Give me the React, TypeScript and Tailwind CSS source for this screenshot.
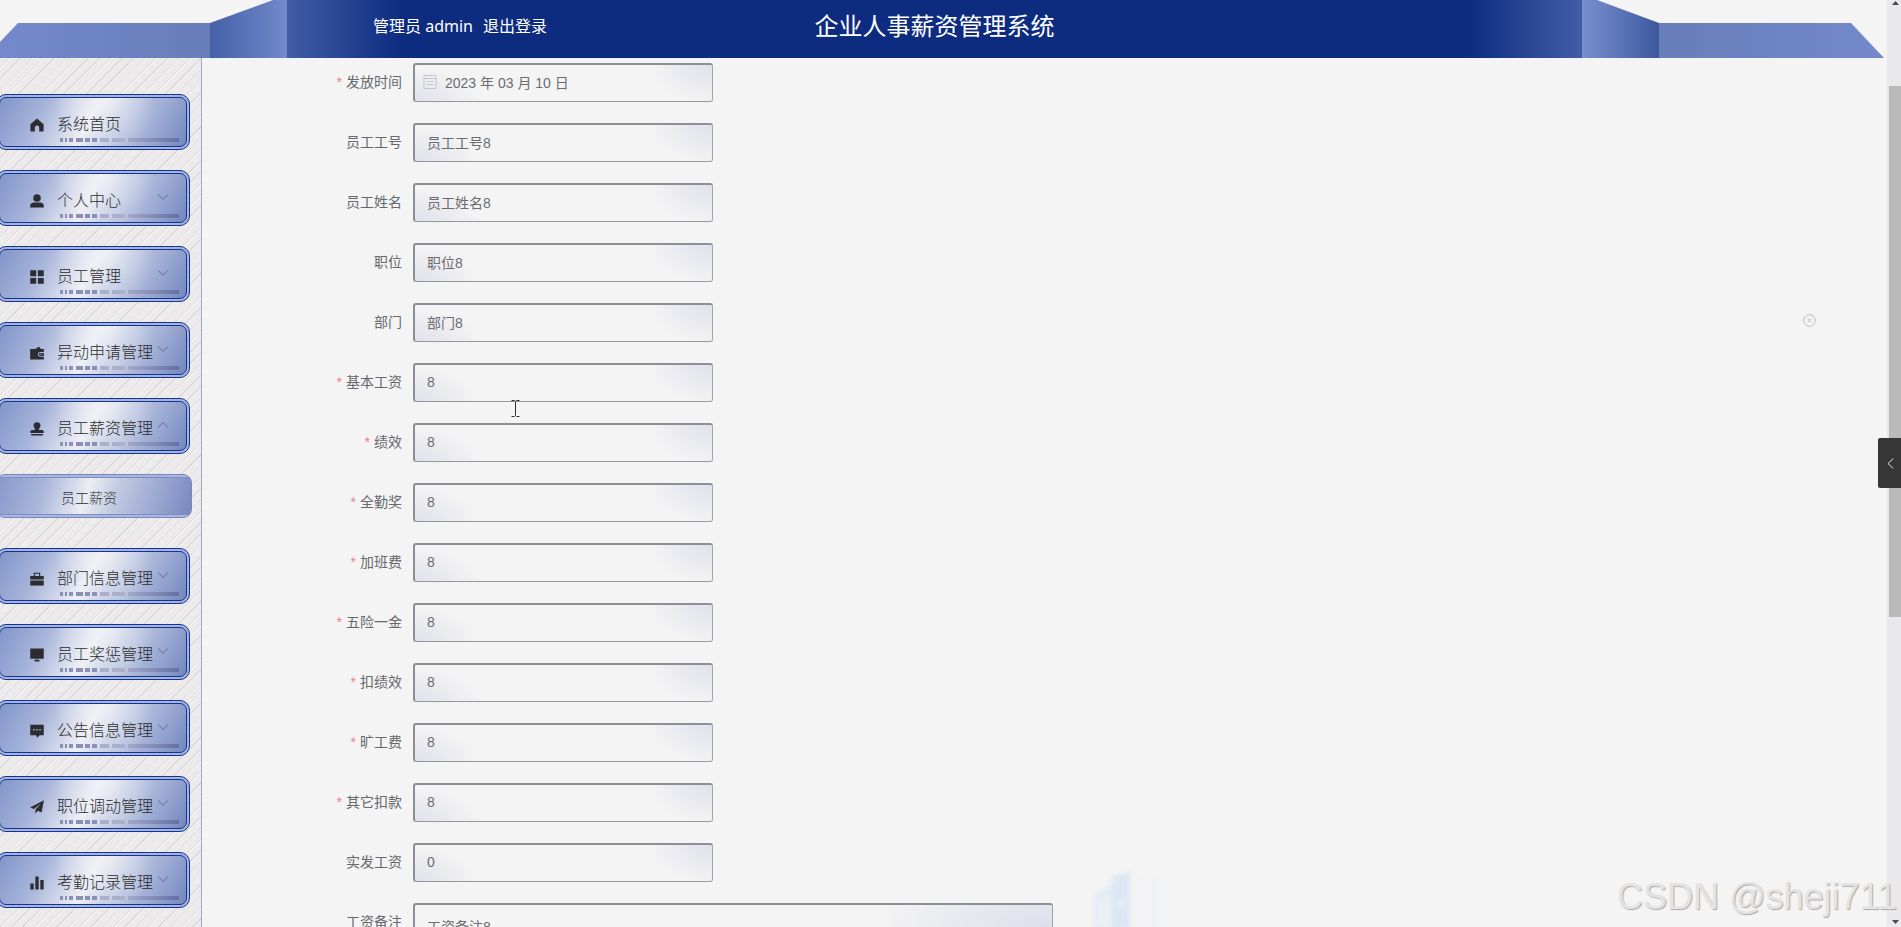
import { Fragment, useState, type ReactNode } from "react";

type MenuItem = { label: string; icon: ReactNode; open?: boolean; plain?: boolean; children?: string[] };

const MENU: MenuItem[] = [
  { label: "系统首页", plain: true, icon: <path d="M8 .5.5 7V15.500h5v-4.400a2.500 2.500 0 0 1 5 0v4.400h5V7z" /> },
  {
    label: "个人中心",
    icon: (
      <>
        <circle cx="8" cy="4.600" r="4.300" />
        <path d="M.2 15.500v-1.900c0-2.600 1.800-4 4.300-4h7c2.500 0 4.300 1.400 4.300 4v1.900z" />
      </>
    ),
  },
  { label: "员工管理", icon: <path d="M.3.3h6.700v6.700H.3zM9 .3h6.700v6.700H9zM.3 9h6.700v6.700H.3zM9 9h6.700v6.700H9z" /> },
  {
    label: "异动申请管理",
    icon: <path fillRule="evenodd" d="M.2 3.400h6L10.200.6l2.200 2.800H15.800v3.400H11.800a2.800 2.800 0 0 0 0 5.600h4v3H.2zM11.800 7.900h4v3.400h-4a1.700 1.700 0 0 1 0-3.400zm.2 1v1.400h1.300V8.900z" />,
  },
  {
    label: "员工薪资管理",
    open: true,
    children: ["员工薪资"],
    icon: <path d="M8 .3a4 4 0 0 1 4 4c0 1.900-1.800 2.900-1.800 4.900h3.300c1.300 0 2.200.8 2.200 2v1.300H.3v-1.300c0-1.200.9-2 2.200-2h3.300C5.800 7.200 4 6.200 4 4.300a4 4 0 0 1 4-4zM1.300 13.800h13.400v1.700H1.300z" />,
  },
  {
    label: "部门信息管理",
    icon: (
      <>
        <path fillRule="evenodd" d="M4.300.8h7.400v3.700h4v4H.3v-4h4zm1.300 1.300v2.400h4.800V2.100z" />
        <path d="M.3 9.700h15.400v5.800H.3z" />
      </>
    ),
  },
  { label: "员工奖惩管理", icon: <path d="M.3.5h15.400v11.700H.3zM6.500 13.200h3l1.500 1v1.200H5v-1.200z" /> },
  {
    label: "公告信息管理",
    icon: <path fillRule="evenodd" d="M.3.8h15.400v12H11L8.300 15.700 7 12.800H.3zM3.700 5.800v1.700h1.700V5.800zm3.400 0v1.700h1.700V5.800zm3.500 0v1.700h1.700V5.800z" />,
  },
  { label: "职位调动管理", icon: <path d="M15.900.4.1 8.600l4.400 1.700L12.500 4 6.200 11v4.800l2.500-3.600 4.500 2z" /> },
  { label: "考勤记录管理", icon: <path d="M.4 8.500h3.800v7H.4zM6.100.7h3.800v14.800H6.100zM11.800 4.700h3.800v10.800h-3.800z" /> },
];

const FIELDS = [
  { id: "date", label: "发放时间", value: "2023 年 03 月 10 日", required: true, date: true },
  { id: "no", label: "员工工号", value: "员工工号8" },
  { id: "name", label: "员工姓名", value: "员工姓名8" },
  { id: "post", label: "职位", value: "职位8" },
  { id: "dept", label: "部门", value: "部门8" },
  { id: "base", label: "基本工资", value: "8", required: true },
  { id: "perf", label: "绩效", value: "8", required: true },
  { id: "full", label: "全勤奖", value: "8", required: true },
  { id: "over", label: "加班费", value: "8", required: true },
  { id: "insure", label: "五险一金", value: "8", required: true },
  { id: "cutperf", label: "扣绩效", value: "8", required: true },
  { id: "absent", label: "旷工费", value: "8", required: true },
  { id: "other", label: "其它扣款", value: "8", required: true },
  { id: "real", label: "实发工资", value: "0" },
];

const BOX =
  "rounded-[3px] border-t-2 border-l-2 border-r border-b border-t-[#8e8f94] border-l-[#8e8f94] border-r-[#a2a3a8] border-b-[#96979c] text-sm text-[#6b6c70] outline-none";
const TINT =
  "bg-[radial-gradient(ellipse_64px_34px_at_0%_100%,#e0e0ec,transparent),radial-gradient(ellipse_64px_38px_at_100%_0%,#dfe0ec,transparent)]";

function Header() {
  return (
    <header className="flex h-[58px] shrink-0">
      <svg className="h-[58px] w-[287px] shrink-0" viewBox="0 0 287 58" aria-hidden="true">
        <defs>
          <linearGradient id="wingL"><stop offset="0" stopColor="#7389cb" /><stop offset="1" stopColor="#677eb9" /></linearGradient>
          <linearGradient id="foldL"><stop offset="0" stopColor="#4460a8" /><stop offset="1" stopColor="#728aca" /></linearGradient>
        </defs>
        <path d="M0 42 18 23H210V58H0z" fill="url(#wingL)" />
        <path d="M210 23 273 0h14v58h-77z" fill="url(#foldL)" />
      </svg>
      <div className="grid flex-1 grid-cols-[1fr_auto_1fr] items-center bg-[linear-gradient(90deg,#425ca6_0,#0d2c80_115px,#0d2c80_calc(100%-115px),#425ca6_100%)] pb-[6px] text-white">
        <div className="flex gap-[10px] pl-[86px] text-base">
          <span>管理员 admin</span>
          <a href="#logout">退出登录</a>
        </div>
        <h1 className="text-2xl">企业人事薪资管理系统</h1>
      </div>
      <svg className="h-[58px] w-[305px] shrink-0" viewBox="0 0 305 58" aria-hidden="true">
        <defs>
          <linearGradient id="wingR"><stop offset="0" stopColor="#677eb9" /><stop offset="1" stopColor="#7389cb" /></linearGradient>
          <linearGradient id="foldR"><stop offset="0" stopColor="#7990cd" /><stop offset="1" stopColor="#3d589f" /></linearGradient>
        </defs>
        <path d="M0 0h15l62 23v35H0z" fill="url(#foldR)" />
        <path d="M77 23h192l33 35H77z" fill="url(#wingR)" />
      </svg>
    </header>
  );
}

function Dashes() {
  return (
    <svg className="absolute bottom-[4px] left-[60px] h-1 w-[119px]" viewBox="0 0 119 4" aria-hidden="true">
      <defs>
        <linearGradient id="dash"><stop offset="0" stopColor="#a3a9c9" /><stop offset="1" stopColor="#6470a4" /></linearGradient>
      </defs>
      <path fill="#8c90b6" d="M0 0h3v4H0zM5 0h2v4H5zM9 0h4v4H9zM16 0h7v4h-7zM25 0h5v4h-5zM32 0h5v4h-5z" />
      <path fill="#abafcb" d="M40 0h9v4h-9zM52 0h13v4H52z" />
      <path fill="url(#dash)" d="M68 0h51v4H68z" />
    </svg>
  );
}

function Sidebar() {
  return (
    <nav className="w-[202px] shrink-0 overflow-hidden border-r border-[#a3a6cf] bg-[repeating-linear-gradient(135deg,#edeaeb_0,#edeaeb_6px,#dbd8da_6px,#dbd8da_7px,#f4f2f3_7px,#f4f2f3_8px)] pt-9 text-[#2c2d30]">
      <ul className="flex flex-col gap-5">
        {MENU.map((item) => (
          <Fragment key={item.label}>
            <li className="-ml-1 h-14 w-[194px]">
              <button
                type="button"
                className="block size-full rounded-[10px] border border-[#17358a] bg-[#a3b4e2] p-[2px] text-left"
              >
                <span className="relative flex size-full items-center gap-[13px] rounded-[7px] border border-[#17358a] bg-[radial-gradient(ellipse_50px_60px_at_56%_0%,#f1f2f7bb,transparent),linear-gradient(118deg,#8095ca_0%,#a9b6db_24%,#eeeff5_48%,#c3cce4_60%,#a3b0d6_78%,#7386bf_100%)] pt-[6px] pl-[30px]">
                  <svg className="size-[14px] shrink-0" viewBox="0 0 16 16" fill="currentColor" aria-hidden="true">{item.icon}</svg>
                  <span className="text-base font-light whitespace-nowrap">{item.label}</span>
                  {!item.plain && (
                    <svg className="absolute top-[20px] right-[17px] h-[6px] w-[12px]" viewBox="0 0 12 6" fill="none" stroke="#66708f" aria-hidden="true">
                      <path d={item.open ? "M1 5.500 6 .7l5 4.800" : "M1 .5l5 4.800L11 .5"} />
                    </svg>
                  )}
                  <Dashes />
                </span>
              </button>
            </li>
            {item.children?.map((child) => (
              <li key={child} className="mb-[10px] -ml-1 h-11 w-[196px]">
                <a
                  href="#salary"
                  className="block size-full rounded-[9px] border border-[#7688bd] bg-[#a9b7df] py-[2px]"
                >
                  <span className="flex size-full items-center rounded-[4px] border-y border-[#7d8ec2] bg-[linear-gradient(108deg,#8598cb_0%,#a9b6da_24%,#eceef4_46%,#c3cbe2_60%,#7688c0_100%)] pt-[4px] pl-16 text-sm font-light">
                    {child}
                  </span>
                </a>
              </li>
            ))}
          </Fragment>
        ))}
      </ul>
    </nav>
  );
}

function SalaryForm() {
  const [values, setValues] = useState<Record<string, string>>(() =>
    Object.fromEntries(FIELDS.map((f) => [f.id, f.value])),
  );
  return (
    <form className="flex flex-col gap-[21px]">
      {FIELDS.map((f) => (
        <div key={f.id} className="flex h-[39px] items-center gap-[11px]">
          <label htmlFor={f.id} className="w-[200px] pb-[2px] text-right text-sm text-[#66686c]">
            {f.required && <span className="mr-1 text-[#ea7f93]">*</span>}
            {f.label}
          </label>
          <div className="relative h-full w-[300px]">
            <input
              id={f.id}
              type="text"
              value={values[f.id]}
              onChange={(e) => setValues({ ...values, [f.id]: e.target.value })}
              className={`${BOX} ${TINT} size-full pb-[2px] ${f.date ? "pl-[30px]" : "pl-3"}`}
            />
            {f.date && (
              <svg className="absolute top-3 left-[10px] size-[14px]" viewBox="0 0 14 14" fill="none" stroke="#c3c6ce" aria-hidden="true">
                <path d="M1 .5h12v13H1zM1 3.500h12M3.500 6.500h7M3.500 9.500h7" />
              </svg>
            )}
          </div>
        </div>
      ))}
      <div className="flex items-start gap-[11px]">
        <label htmlFor="remark" className="w-[200px] text-right text-sm leading-[39px] text-[#66686c]">工资备注</label>
        <textarea
          id="remark"
          defaultValue="工资备注8"
          className={`${BOX} h-[120px] w-[640px] resize-none bg-[radial-gradient(ellipse_180px_70px_at_100%_20%,#dcdeea,transparent)] px-3 py-3`}
        />
      </div>
    </form>
  );
}

function Skyline() {
  return (
    <svg className="absolute top-[814px] left-[890px] h-[58px] w-[78px] blur-[2px]" viewBox="0 0 78 58" aria-hidden="true">
      <path d="M2 22 20 12V58H2z" fill="#e3edf5" />
      <path d="M20 4 38 0V58H20z" fill="#dbe8f3" />
      <path d="M7 28h4v26H7zM13 25h4v29h-4zM27 28h4v6h-4z" fill="#eef3f7" />
      <path d="M46 4h4v54h-4zM58 2h8v56h-8zM72 18h4v40h-4z" fill="#eff1f4" />
    </svg>
  );
}

export default function App() {
  return (
    <div className="relative flex h-screen overflow-hidden bg-[#f4f4f4] font-['Liberation_Sans','Noto_Sans_CJK_SC',sans-serif]">
      <div className="flex min-w-0 flex-1 flex-col">
        <div className="font-['Noto_Sans','Noto_Sans_CJK_SC',sans-serif]">
          <Header />
        </div>
        <div className="flex min-h-0 flex-1">
          <Sidebar />
          <main className="relative min-w-0 flex-1 overflow-hidden pt-[5px]">
            <Skyline />
            <SalaryForm />
            <button type="button" aria-label="清除" className="absolute top-[256px] right-[71px] size-[13px] text-[#b9bbc0]">
              <svg className="size-full" viewBox="0 0 13 13" fill="none" stroke="currentColor" aria-hidden="true">
                <circle cx="6.500" cy="6.500" r="5.800" />
                <path d="m4.500 4.500 4 4m0-4-4 4" />
              </svg>
            </button>
          </main>
        </div>
      </div>
      <div className="flex w-[14px] shrink-0 flex-col bg-[#e9e8ea]">
        <svg className="h-[86px] w-full" viewBox="0 0 14 86" fill="#4a4a4a" aria-hidden="true"><path d="M5 5 8.500 1 12 5z" /></svg>
        <div className="ml-[2px] h-[531px] bg-[#bababa]" />
        <svg className="mt-auto h-[10px] w-full" viewBox="0 0 14 10" fill="#4a4a4a" aria-hidden="true"><path d="M5 3h7L8.500 7z" /></svg>
      </div>
      <button type="button" aria-label="展开" className="absolute top-[438px] right-0 flex h-[50px] w-[23px] items-center justify-center rounded-l-[2px] bg-[#363636] pl-[2px] text-[#e5e5e5]">
        <svg className="h-[11px] w-[7px]" viewBox="0 0 7 11" fill="none" stroke="currentColor" aria-hidden="true"><path d="M6.300.5 1 5.500l5.300 5" /></svg>
      </button>
      <svg className="absolute top-[400px] left-[511px] h-[17px] w-[9px]" viewBox="0 0 9 17" fill="none" stroke="#333" aria-hidden="true">
        <path d="M.5.5H3.500L4.500 1.500 5.500.5H8.500M4.500 1.500v14M.5 16.500H3.500L4.500 15.500 5.500 16.500H8.500" />
      </svg>
      <p className="absolute right-[4px] bottom-[10px] text-[36px] leading-10 text-[#e4e4e4] [text-shadow:1px_1px_1px_#a8a8a8]">CSDN @sheji711</p>
    </div>
  );
}
